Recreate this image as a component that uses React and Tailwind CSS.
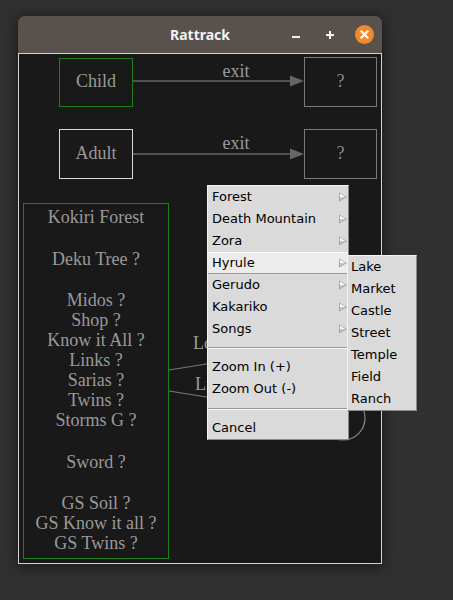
import React from "react";

const kokiri = [
  { t: "Kokiri Forest" },
  { b: true },
  { t: "Deku Tree ?" },
  { b: true },
  { t: "Midos ?" },
  { t: "Shop ?" },
  { t: "Know it All ?" },
  { t: "Links ?" },
  { t: "Sarias ?" },
  { t: "Twins ?" },
  { t: "Storms G ?" },
  { b: true },
  { t: "Sword ?" },
  { b: true },
  { t: "GS Soil ?" },
  { t: "GS Know it all ?" },
  { t: "GS Twins ?" },
];

const mainItems = ["Forest", "Death Mountain", "Zora", "Hyrule", "Gerudo", "Kakariko", "Songs"];
const subItems = ["Lake", "Market", "Castle", "Street", "Temple", "Field", "Ranch"];

function Arrow() {
  return (
    <svg width="8" height="10" viewBox="0 0 8 10">
      <polygon points="0,0.5 8,5 0,9.5" fill="#9a9a9a" />
      <polygon points="0.8,1.6 6.6,5 0.8,5" fill="#ffffff" />
      <polygon points="0.8,5 6.6,5 0.8,8.4" fill="#c4c4c4" />
    </svg>
  );
}

function Sep({ top }) {
  return (
    <div className={top}>
      <div className="h-px bg-[#9a9a9a]" />
      <div className="h-px bg-[#f8f8f8]" />
    </div>
  );
}

export default function App() {
  return (
    <div className="w-[453px] h-[600px] bg-[#303030] pt-[16px] pl-[18px]">
      <div className="w-[364px] rounded-t-[7px] shadow-[0_2px_14px_rgba(0,0,0,0.55)]">
        {/* Title bar */}
        <div className="relative h-[37px] rounded-t-[7px] bg-[#59514c] flex items-center justify-center">
          <span className="text-[#f2f2f2] font-bold text-[14px] font-['Noto_Sans',sans-serif] leading-none">
            Rattrack
          </span>
          <div className="absolute right-[1px] top-0 h-full flex">
            <div className="w-[34px] h-full flex items-center justify-center">
              <svg width="10" height="10" viewBox="0 0 10 10">
                <rect x="1" y="6" width="8" height="2" fill="#f2f2f2" />
              </svg>
            </div>
            <div className="w-[34px] h-full flex items-center justify-center">
              <svg width="10" height="10" viewBox="0 0 10 10">
                <rect x="1" y="4" width="8" height="2" fill="#f2f2f2" />
                <rect x="4" y="1" width="2" height="8" fill="#f2f2f2" />
              </svg>
            </div>
            <div className="w-[34px] h-full flex items-center justify-center">
              <svg width="19" height="19" viewBox="0 0 19 19">
                <circle cx="9.5" cy="9.5" r="9.5" fill="#ef8a2e" />
                <path d="M6.3 6.3 L12.7 12.7 M12.7 6.3 L6.3 12.7" stroke="#fff" strokeWidth="2.2" strokeLinecap="round" />
              </svg>
            </div>
          </div>
        </div>

        {/* Canvas */}
        <div className="relative h-[511px] bg-[#191919] border border-[#d2d2d2] font-['Liberation_Serif',serif] text-[18px] text-[#999999]">
          <svg className="absolute left-0 top-0" width="362" height="509">
            <line x1="114" y1="27" x2="272" y2="27" stroke="#666" strokeWidth="1.5" />
            <polygon points="271,21.5 285,27 271,32.5" fill="#666" />
            <line x1="114" y1="100" x2="272" y2="100" stroke="#666" strokeWidth="1.5" />
            <polygon points="271,94.5 285,100 271,105.5" fill="#666" />
            <line x1="150" y1="316" x2="200" y2="308" stroke="#777" strokeWidth="1.2" />
            <line x1="150" y1="337" x2="200" y2="345" stroke="#777" strokeWidth="1.2" />
            <circle cx="324" cy="364" r="22" fill="none" stroke="#888" strokeWidth="1.2" />
          </svg>

          <div className="absolute left-[40px] top-[4px] w-[74px] h-[49px] border border-[#1c7f1c] flex items-center justify-center leading-none pb-[3px]">
            Child
          </div>
          <div className="absolute left-[40px] top-[75px] w-[74px] h-[50px] border border-[#d8d8d8] flex items-center justify-center leading-none pb-[2px]">
            Adult
          </div>
          <div className="absolute left-[285px] top-[3px] w-[73px] h-[50px] border border-[#7a7a7a] flex items-center justify-center leading-none text-[#888] pb-[2px]">
            ?
          </div>
          <div className="absolute left-[285px] top-[75px] w-[73px] h-[50px] border border-[#7a7a7a] flex items-center justify-center leading-none text-[#888] pb-[2px]">
            ?
          </div>

          <div className="absolute left-[187px] top-[7px] w-[60px] text-center leading-[20px]">exit</div>
          <div className="absolute left-[187px] top-[79px] w-[60px] text-center leading-[20px]">exit</div>

          <div className="absolute left-[174px] top-[279px] w-[14px] overflow-hidden leading-[20px] whitespace-nowrap">Lo</div>
          <div className="absolute left-[176px] top-[320px] w-[12px] overflow-hidden leading-[20px] whitespace-nowrap">Li</div>

          <div className="absolute left-[4px] top-[149px] w-[146px] h-[356px] border border-[#1c7f1c] pt-[3px] flex flex-col items-center">
            {kokiri.map((l, i) =>
              l.b ? (
                <div key={i} className="h-[21.5px]" />
              ) : (
                <div key={i} className="h-[20px] leading-[20px] whitespace-nowrap">
                  {l.t}
                </div>
              )
            )}
          </div>

          {/* Context menu */}
          <div className="absolute left-[188px] top-[131px] w-[142px] bg-[#dadada] border border-t-[#f4f4f4] border-l-[#f4f4f4] border-r-[#8a8a8a] border-b-[#8a8a8a] font-['DejaVu_Sans',sans-serif] text-[13px] text-black">
            {mainItems.map((it) =>
              it === "Hyrule" ? (
                <div
                  key={it}
                  className="h-[22px] flex items-center justify-between pl-[4px] pr-[1px] bg-[#ececec] border-t border-t-[#fafafa] border-b border-b-[#9c9c9c]"
                >
                  <span>{it}</span>
                  <Arrow />
                </div>
              ) : (
                <div key={it} className="h-[22px] flex items-center justify-between pl-[4px] pr-[1px]">
                  <span>{it}</span>
                  <Arrow />
                </div>
              )
            )}
            <Sep top="pt-[7px] pb-[7px]" />
            <div className="h-[22px] flex items-center pl-[4px]">Zoom In (+)</div>
            <div className="h-[22px] flex items-center pl-[4px]">Zoom Out (-)</div>
            <Sep top="pt-[8px] pb-[7px]" />
            <div className="h-[22px] flex items-center pl-[4px]">Cancel</div>
          </div>

          {/* Submenu */}
          <div className="absolute left-[328px] top-[201px] w-[70px] bg-[#dadada] border border-t-[#f4f4f4] border-l-[#f4f4f4] border-r-[#8a8a8a] border-b-[#8a8a8a] font-['DejaVu_Sans',sans-serif] text-[13px] text-black">
            {subItems.map((it) => (
              <div key={it} className="h-[22px] flex items-center pl-[3px]">
                {it}
              </div>
            ))}
          </div>
        </div>
      </div>
    </div>
  );
}
